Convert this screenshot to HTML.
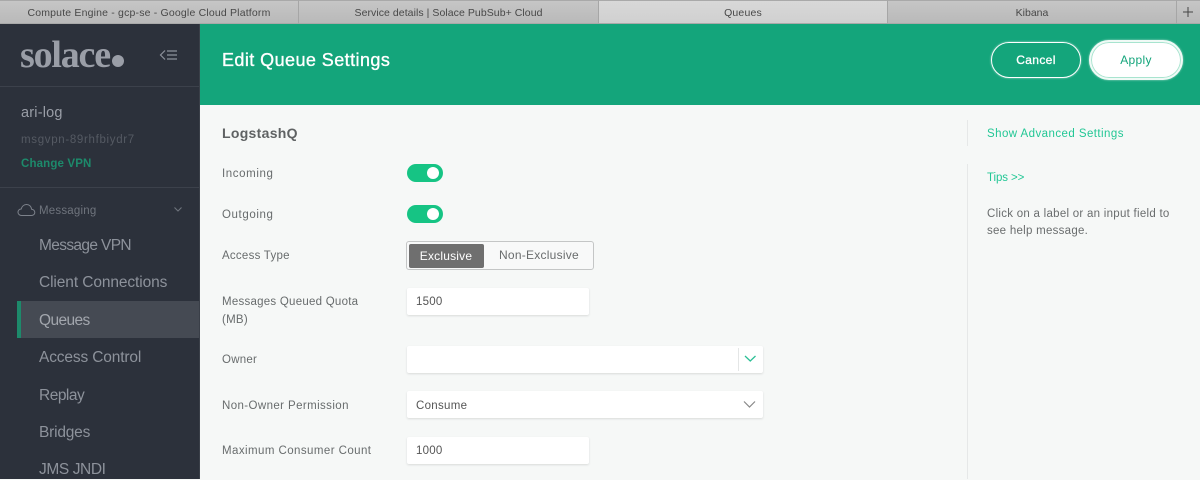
<!DOCTYPE html>
<html><head><meta charset="utf-8"><style>
*{box-sizing:border-box}
html,body{margin:0;padding:0;width:1200px;height:479px;overflow:hidden;background:#f6f8f7;font-family:"Liberation Sans",sans-serif}
.a{position:absolute;white-space:nowrap}
.tab{top:0;height:24px;line-height:24px;font-size:10.5px;color:#484848;text-align:center;background:linear-gradient(#c6c6c6,#b9b9b9);border-top:1px solid #a9a9a9;border-right:1px solid #a6a6a6;border-bottom:1px solid #a9a9a9}
.nav{left:39px;font-size:15.5px;color:#8d929b;line-height:20px}
.lb{left:222px;font-size:11.5px;color:#686c6d;line-height:16px;letter-spacing:.25px}
.inp{background:#fff;border-radius:2px;box-shadow:0 1px 2px rgba(0,0,0,.12);font-size:11.5px;color:#555;padding-left:9px;letter-spacing:.25px}
.tog{left:407px;width:36px;height:18px;border-radius:9px;background:#16c484}
.tog i{position:absolute;left:20px;top:3px;width:12px;height:12px;border-radius:50%;background:#fff}
</style></head><body>
<div class="a" style="left:0;top:23px;width:200px;height:456px;background:#2c313b;border-right:1px solid #3a3f48"></div>
<div class="a" style="left:200px;top:23px;width:1000px;height:82px;background:#14a57b"></div>

<div class="a tab" style="left:0;width:299px;letter-spacing:.18px">Compute Engine - gcp-se - Google Cloud Platform</div>
<div class="a tab" style="left:299px;width:300px;letter-spacing:.06px">Service details | Solace PubSub+ Cloud</div>
<div class="a tab" style="left:599px;width:289px;background:linear-gradient(#d8d8d8,#d0d0d0);letter-spacing:.18px">Queues</div>
<div class="a tab" style="left:888px;width:289px;">Kibana</div>
<div class="a tab" style="left:1177px;width:23px;border-right:0"></div>
<svg class="a" style="left:1182px;top:6px" width="12" height="12"><path d="M6 1v10M1 6h10" stroke="#444" stroke-width="1" fill="none"/></svg>

<div class="a" style="left:0;top:86px;width:199px;height:1px;background:#3c414b"></div>
<div class="a" style="left:0;top:187px;width:199px;height:1px;background:#3c414b"></div>
<div class="a" style="left:20px;top:35px;font:bold 38px/40px 'Liberation Serif',serif;color:#9a9ea7;letter-spacing:-1.2px">solace</div>
<div class="a" style="left:112px;top:55px;width:12px;height:12px;border-radius:50%;background:#9a9ea7"></div>
<svg class="a" style="left:159px;top:48px" width="20" height="14" fill="none" stroke="#8d929b" stroke-width="1.2"><path d="M6 2.5 1.5 7 6 11.5M8 3h10M8 7h10M8 11h10"/></svg>

<div class="a" style="left:21px;top:104px;font-size:14.5px;line-height:18px;color:#9a9ea7;letter-spacing:.2px">ari-log</div>
<div class="a" style="left:21px;top:132px;font-size:11.5px;line-height:16px;color:#555a63;letter-spacing:.68px">msgvpn-89rhfbiydr7</div>
<div class="a" style="left:21px;top:156px;font-size:11.5px;line-height:16px;font-weight:bold;color:#1d8a6b;letter-spacing:.15px">Change VPN</div>

<svg class="a" style="left:17px;top:203px" width="19" height="14" fill="none" stroke="#7d828b" stroke-width="1"><path d="M5 12.5H4.500C2.500 12.500 1 11 1 9.200 1 7.400 2.400 6 4.200 6 4.800 3.500 6.800 1.500 9.500 1.500 12.300 1.500 14.400 3.600 14.600 6.200 16.400 6.400 17.800 7.700 17.800 9.500 17.800 11.300 16.300 12.500 14.500 12.500Z"/></svg>
<div class="a" style="left:39px;top:204px;font-size:11.5px;line-height:15px;color:#6f747d;letter-spacing:.2px">Messaging</div>
<svg class="a" style="left:173px;top:206px" width="10" height="7" fill="none" stroke="#6f747d" stroke-width="1.1"><path d="M1.500 1.500 5 5 8.500 1.500"/></svg>

<div class="a" style="left:17px;top:301px;width:182px;height:37px;background:#454a53"></div>
<div class="a" style="left:17px;top:301px;width:4px;height:37px;background:#1d8a6b"></div>
<div class="a nav" style="top:236px;letter-spacing:-.65px">Message VPN</div>
<div class="a nav" style="top:273px;letter-spacing:-.1px">Client Connections</div>
<div class="a nav" style="top:311px;color:#a2a6ad;letter-spacing:-.6px">Queues</div>
<div class="a nav" style="top:348px;letter-spacing:-.15px">Access Control</div>
<div class="a nav" style="top:386px;letter-spacing:-.5px">Replay</div>
<div class="a nav" style="top:423px;letter-spacing:-.2px">Bridges</div>
<div class="a nav" style="top:460px;letter-spacing:-.4px">JMS JNDI</div>

<div class="a" style="left:222px;top:49px;font-size:18px;line-height:22px;color:#fff;letter-spacing:.43px;-webkit-text-stroke:.35px #fff">Edit Queue Settings</div>
<div class="a" style="left:991px;top:42px;width:90px;height:36px;border:1.5px solid #fff;border-radius:18px;color:#fff;font-size:12px;line-height:34px;text-align:center;letter-spacing:.35px;-webkit-text-stroke:.3px #fff;box-shadow:0 0 2px rgba(255,255,255,.6)">Cancel</div>
<div class="a" style="left:1089px;top:40px;width:94px;height:40px;background:#fff;border-radius:20px;border:2px solid #f0faf6;box-shadow:inset 0 0 0 1px #a8e4cf,0 0 2px rgba(255,255,255,.6);color:#14a57b;font-size:12px;line-height:37px;text-align:center;letter-spacing:.3px">Apply</div>

<div class="a" style="left:222px;top:124px;font-size:14px;line-height:18px;font-weight:bold;color:#5f6263;letter-spacing:.3px">LogstashQ</div>

<div class="a lb" style="top:166px;letter-spacing:.6px">Incoming</div>
<div class="a lb" style="top:207px;letter-spacing:.6px">Outgoing</div>
<div class="a lb" style="top:248px">Access Type</div>
<div class="a lb" style="top:294px">Messages Queued Quota</div>
<div class="a lb" style="top:312px">(MB)</div>
<div class="a lb" style="top:352px">Owner</div>
<div class="a lb" style="top:398px;letter-spacing:.4px">Non-Owner Permission</div>
<div class="a lb" style="top:443px;letter-spacing:.43px">Maximum Consumer Count</div>

<div class="a tog" style="top:164px"><i></i></div>
<div class="a tog" style="top:205px"><i></i></div>

<div class="a" style="left:406px;top:241px;width:188px;height:29px;border:1px solid #c4c6c6;border-radius:3px;background:#f8f9f9"></div>
<div class="a" style="left:408.500px;top:243.500px;width:75px;height:24px;background:#6f6f6f;border-radius:2px;color:#fff;font-size:12px;line-height:24px;text-align:center;letter-spacing:.2px">Exclusive</div>
<div class="a" style="left:499px;top:248px;font-size:12px;line-height:15px;color:#696c6d;letter-spacing:.25px">Non-Exclusive</div>

<div class="a inp" style="left:407px;top:288px;width:182px;height:27px;line-height:28px">1500</div>
<div class="a inp" style="left:407px;top:346px;width:356px;height:27px"></div>
<div class="a" style="left:738px;top:348px;width:1px;height:23px;background:#e4e6e6"></div>
<svg class="a" style="left:744px;top:354px" width="13" height="10" fill="none" stroke="#2bbf95" stroke-width="1.300"><path d="M1 2 6.250 7 11.500 2"/></svg>
<div class="a inp" style="left:407px;top:391px;width:356px;height:27px;line-height:31px;letter-spacing:.3px">Consume</div>
<svg class="a" style="left:743px;top:400px" width="13" height="9" fill="none" stroke="#888" stroke-width="1.200"><path d="M1 1.500 6.500 7 12 1.500"/></svg>
<div class="a inp" style="left:407px;top:437px;width:182px;height:27px;line-height:28px">1000</div>

<div class="a" style="left:967px;top:120px;width:1px;height:26px;background:#e6e8e8"></div>
<div class="a" style="left:967px;top:164px;width:1px;height:315px;background:#e6e8e8"></div>
<div class="a" style="left:987px;top:126px;font-size:11.500px;line-height:16px;color:#22c795;letter-spacing:.44px">Show Advanced Settings</div>
<div class="a" style="left:987px;top:170px;font-size:11.500px;line-height:16px;color:#22c795;letter-spacing:-.1px">Tips &gt;&gt;</div>
<div class="a" style="left:987px;top:206px;font-size:11.500px;line-height:17px;color:#6a6d6e;letter-spacing:.27px">Click on a label or an input field to<br>see help message.</div>
</body></html>
